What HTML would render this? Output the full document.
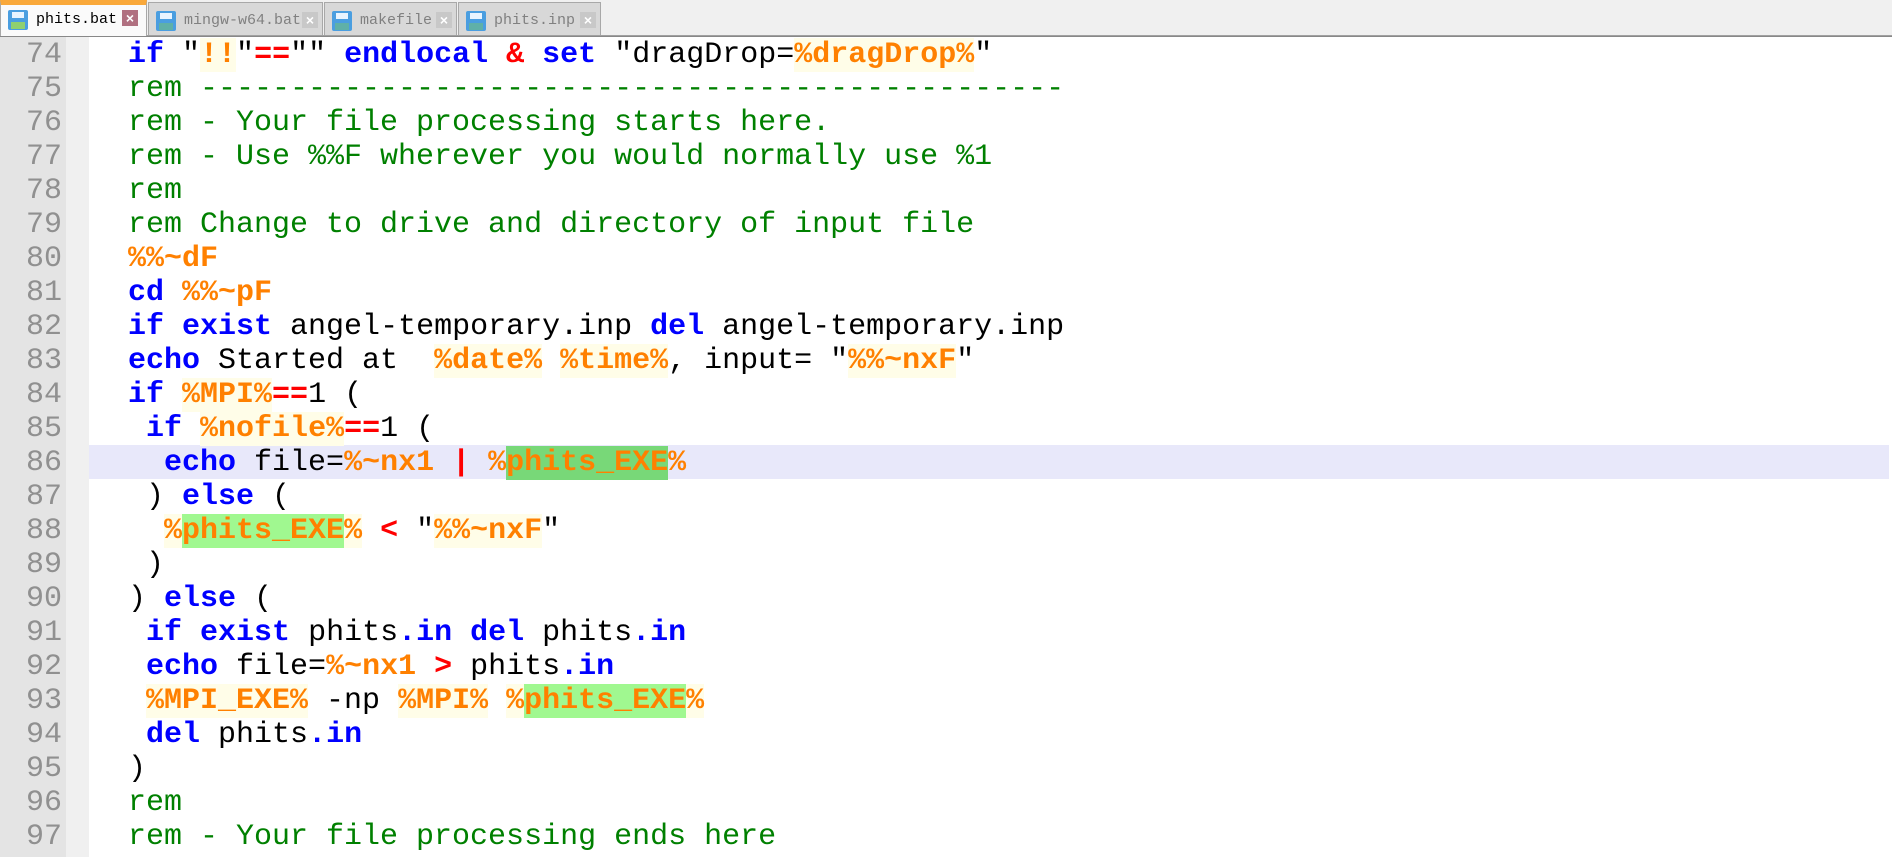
<!DOCTYPE html>
<html><head><meta charset="utf-8"><style>
html,body{margin:0;padding:0;width:1892px;height:856px;overflow:hidden;background:#fff;font-family:"Liberation Sans",sans-serif}
#tabs{position:absolute;left:0;top:0;width:1892px;height:35px;background:#f0f0f0;border-bottom:1px solid #a0a0a0}
.tab{position:absolute;top:2px;height:33px;background:#d8d8d8;border:1px solid #a8a8a8;border-bottom:none;box-sizing:border-box;font-family:"Liberation Mono",monospace;font-size:15px;color:#808080}
.tab.act{top:0;height:36px;background:#fafafa;color:#000;border-top:5px solid #f9a83a}
.tab .ic{position:absolute;left:7px;top:8px;width:20px;height:20px;background:#4a9ee0;border-radius:2px}
.tab .ic:after{content:"";position:absolute;left:4px;top:2px;width:12px;height:6px;background:#e8f4ff}
.tab .ic:before{content:"";position:absolute;left:3px;top:12px;width:14px;height:7px;background:#5fb0a8}
.tab.act .ic{top:5px}
.tab.act .ic:before{background:#8fd070}
.tab .t{position:absolute;left:35px;top:9px}
.tab.act .t{top:6px}
.tab .x{position:absolute;top:9px;width:16px;height:16px;background:#c8c8c8;color:#fff;font-size:14px;line-height:16px;text-align:center;font-family:"Liberation Sans",sans-serif;font-weight:bold}
.tab.act .x{top:5px;background:#b07080}
#ed{position:absolute;left:0;top:36px;width:1892px;height:820px;border-top:1px solid #888}
#gut{position:absolute;left:0;top:0;width:66px;height:820px;background:#e4e4e4}
#gut2{position:absolute;left:66px;top:0;width:23px;height:820px;background:#f0f0f0}
.ln{position:absolute;left:0;width:62px;text-align:right;font-family:"Liberation Mono",monospace;font-size:30px;color:#909090;line-height:34px}
.cur{position:absolute;left:89px;width:1800px;height:34px;background:#e8e8fa}
pre{position:absolute;left:128px;top:1px;margin:0;font-family:"Liberation Mono",monospace;font-size:30px;line-height:34px;color:#000}
.k{color:#0000ff;font-weight:bold}.v{color:#ff8000;font-weight:bold}.o{color:#ff0000;font-weight:bold}.c{color:#008000}
.g{background:#a0f890}.g2{background:#78d878}.y{background:#fffde8}
</style></head><body>
<div id="tabs">
<div class="tab act" style="left:0;width:147px"><div class="ic"></div><span class="t">phits.bat</span><span class="x" style="left:121px">×</span></div>
<div class="tab" style="left:148px;width:175px"><div class="ic"></div><span class="t">mingw-w64.bat</span><span class="x" style="left:153px">×</span></div>
<div class="tab" style="left:324px;width:133px"><div class="ic"></div><span class="t">makefile</span><span class="x" style="left:111px">×</span></div>
<div class="tab" style="left:458px;width:143px"><div class="ic"></div><span class="t">phits.inp</span><span class="x" style="left:121px">×</span></div>
</div>
<div id="ed">
<div id="gut"></div><div id="gut2"></div>
<div class="cur" style="top:408px"></div>
<div class="ln" style="top:1px">74<br>75<br>76<br>77<br>78<br>79<br>80<br>81<br>82<br>83<br>84<br>85<br>86<br>87<br>88<br>89<br>90<br>91<br>92<br>93<br>94<br>95<br>96<br>97</div>
<pre><span class="k">if</span> "<span class="v y">!!</span>"<span class="o">==</span>"" <span class="k">endlocal</span> <span class="o">&amp;</span> <span class="k">set</span> "dragDrop=<span class="v y">%dragDrop%</span>"
<span class="c">rem ------------------------------------------------</span>
<span class="c">rem - Your file processing starts here.</span>
<span class="c">rem - Use %%F wherever you would normally use %1</span>
<span class="c">rem</span>
<span class="c">rem Change to drive and directory of input file</span>
<span class="v">%%~dF</span>
<span class="k">cd</span> <span class="v">%%~pF</span>
<span class="k">if</span> <span class="k">exist</span> angel-temporary.inp <span class="k">del</span> angel-temporary.inp
<span class="k">echo</span> Started at  <span class="v y">%date%</span> <span class="v y">%time%</span>, input= "<span class="v y">%%~nxF</span>"
<span class="k">if</span> <span class="v y">%MPI%</span><span class="o">==</span>1 (
 <span class="k">if</span> <span class="v y">%nofile%</span><span class="o">==</span>1 (
  <span class="k">echo</span> file=<span class="v">%~nx1</span> <span class="o">|</span> <span class="v">%<span class="g2">phits_EXE</span>%</span>
 ) <span class="k">else</span> (
  <span class="v y">%<span class="g">phits_EXE</span>%</span> <span class="o">&lt;</span> "<span class="v y">%%~nxF</span>"
 )
) <span class="k">else</span> (
 <span class="k">if</span> <span class="k">exist</span> phits<span class="k">.in</span> <span class="k">del</span> phits<span class="k">.in</span>
 <span class="k">echo</span> file=<span class="v">%~nx1</span> <span class="o">&gt;</span> phits<span class="k">.in</span>
 <span class="v y">%MPI_EXE%</span> -np <span class="v y">%MPI%</span> <span class="v y">%<span class="g">phits_EXE</span>%</span>
 <span class="k">del</span> phits<span class="k">.in</span>
)
<span class="c">rem</span>
<span class="c">rem - Your file processing ends here</span></pre>
</div>
</body></html>
